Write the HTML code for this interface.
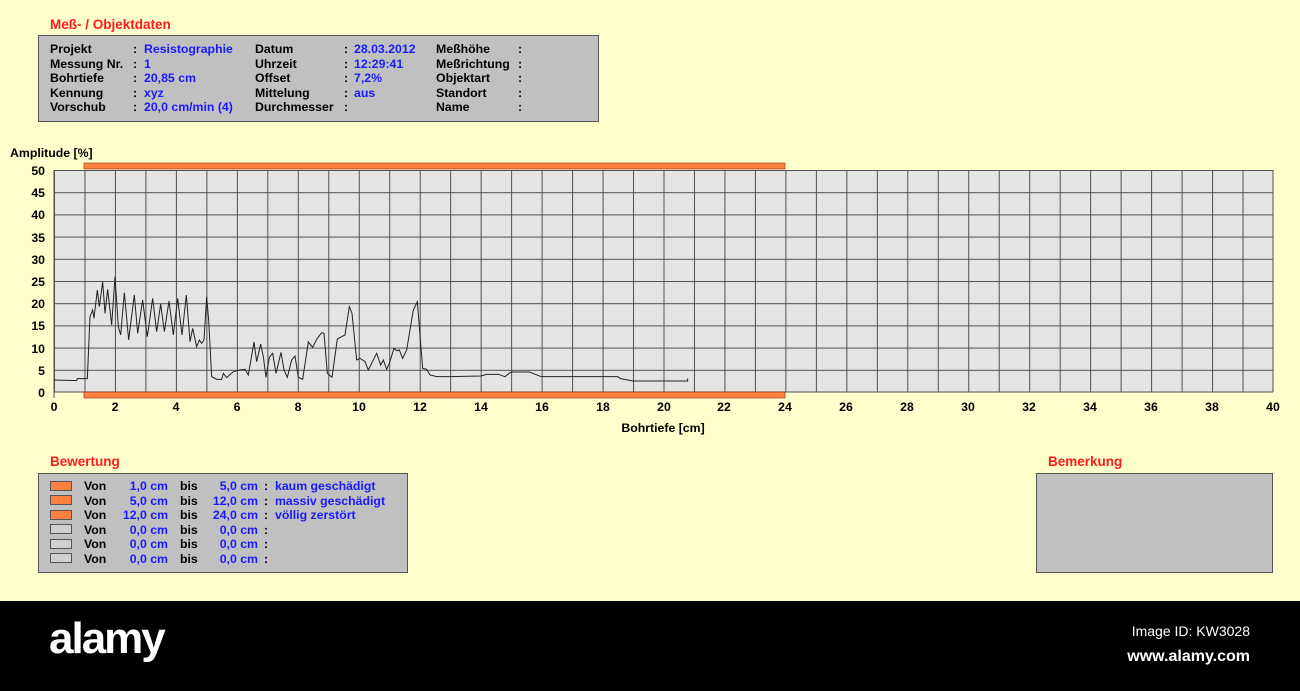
<!DOCTYPE html>
<html><head><meta charset="utf-8"><style>
body{margin:0;width:1300px;height:691px;background:#ffffcc;position:relative;overflow:hidden;font-family:"Liberation Sans",Arial,sans-serif;font-weight:bold;font-size:12.3px;}
.a{position:absolute;white-space:nowrap;}
.r{color:#ff1a1a;font-size:13.5px;}
.b{color:#1a1aff;}
.box{position:absolute;background:#c0c0c0;border:1px solid #555;box-sizing:border-box;}
.sw{position:absolute;width:22px;height:10px;border:1px solid #555;box-sizing:border-box;}
</style></head><body>
<div class="a r" style="left:50px;top:17px">Meß- / Objektdaten</div>
<div class="box" style="left:38px;top:35px;width:561px;height:87px"></div>
<div class="a" style="left:50px;top:42px;line-height:14.5px">Projekt<br>Messung Nr.<br>Bohrtiefe<br>Kennung<br>Vorschub</div>
<div class="a" style="left:133px;top:42px;line-height:14.5px">:<br>:<br>:<br>:<br>:</div>
<div class="a b" style="left:144px;top:42px;line-height:14.5px">Resistographie<br>1<br>20,85 cm<br>xyz<br>20,0 cm/min (4)</div>
<div class="a" style="left:255px;top:42px;line-height:14.5px">Datum<br>Uhrzeit<br>Offset<br>Mittelung<br>Durchmesser</div>
<div class="a" style="left:344px;top:42px;line-height:14.5px">:<br>:<br>:<br>:<br>:</div>
<div class="a b" style="left:354px;top:42px;line-height:14.5px">28.03.2012<br>12:29:41<br>7,2%<br>aus</div>
<div class="a" style="left:436px;top:42px;line-height:14.5px">Meßhöhe<br>Meßrichtung<br>Objektart<br>Standort<br>Name</div>
<div class="a" style="left:518px;top:42px;line-height:14.5px">:<br>:<br>:<br>:<br>:</div>

<div class="a" style="left:10px;top:146px">Amplitude [%]</div>
<svg class="a" style="left:0;top:0" width="1300" height="600">
<defs><pattern id="g" x="54" y="170" width="30.475" height="22.2" patternUnits="userSpaceOnUse">
<path d="M0.5 0V22.2M0 0.5H30.475" stroke="#505050" stroke-width="1" fill="none"/></pattern></defs>
<rect x="54" y="170" width="1219" height="222" fill="#e4e4e4"/>
<rect x="54" y="170" width="1219" height="222" fill="url(#g)"/>
<path d="M1273 170V392M54 392H1273M54 170V398" stroke="#505050" fill="none"/>
<rect x="84" y="163" width="701" height="6" fill="#ff8040" stroke="#803010" stroke-width="0.6"/>
<rect x="84" y="392" width="701" height="6" fill="#ff8040" stroke="#803010" stroke-width="0.6"/>
<g transform="translate(0,140) scale(0.33333)"><polyline fill="none" stroke="#222" stroke-width="3" points="162,720 230,722 232,716 262,716 270,530 278,510 282,535 292,450 298,500 308,425 315,520 323,448 335,555 345,410 355,560 362,585 373,458 386,600 403,465 413,580 428,480 442,590 458,475 470,575 482,492 493,575 507,483 520,585 533,475 546,585 559,465 570,605 578,565 590,620 598,600 605,610 612,600 620,470 626,540 635,710 650,718 665,718 670,700 680,713 700,695 720,690 735,688 745,705 762,606 770,665 782,612 790,650 798,712 808,652 818,640 828,700 843,637 852,690 862,712 875,660 885,648 895,712 908,718 925,606 938,622 950,598 965,578 972,580 982,700 996,712 1012,597 1025,590 1035,585 1048,500 1056,520 1070,660 1080,655 1095,665 1105,690 1130,640 1142,675 1150,660 1160,688 1168,670 1182,625 1190,632 1198,630 1208,655 1220,630 1230,570 1240,510 1252,485 1258,560 1268,685 1280,688 1290,705 1310,710 1350,710 1442,708 1460,703 1496,703 1515,710 1533,696 1588,696 1624,710 1853,710 1862,716 1899,723 2063,723 2063,716"/></g>
<g font-family="Liberation Sans,Arial,sans-serif" font-weight="bold" font-size="12.3" fill="#000" text-anchor="end">
<text x="45" y="175">50</text><text x="45" y="197">45</text><text x="45" y="219">40</text><text x="45" y="242">35</text><text x="45" y="264">30</text><text x="45" y="286">25</text><text x="45" y="308">20</text><text x="45" y="330">15</text><text x="45" y="353">10</text><text x="45" y="375">5</text><text x="45" y="397">0</text>
</g>
<g font-family="Liberation Sans,Arial,sans-serif" font-weight="bold" font-size="12.3" fill="#000" text-anchor="middle">
<text x="54" y="411">0</text><text x="115" y="411">2</text><text x="176" y="411">4</text><text x="237" y="411">6</text><text x="298" y="411">8</text><text x="359" y="411">10</text><text x="420" y="411">12</text><text x="481" y="411">14</text><text x="542" y="411">16</text><text x="603" y="411">18</text><text x="664" y="411">20</text><text x="724" y="411">22</text><text x="785" y="411">24</text><text x="846" y="411">26</text><text x="907" y="411">28</text><text x="968" y="411">30</text><text x="1029" y="411">32</text><text x="1090" y="411">34</text><text x="1151" y="411">36</text><text x="1212" y="411">38</text><text x="1273" y="411">40</text>
<text x="663" y="432">Bohrtiefe [cm]</text>
</g>
</svg>

<div class="a r" style="left:50px;top:454px">Bewertung</div>
<div class="box" style="left:38px;top:473px;width:370px;height:100px"></div>
<div class="sw" style="left:50px;top:481px;background:#ff8040"></div>
<div class="sw" style="left:50px;top:495px;background:#ff8040"></div>
<div class="sw" style="left:50px;top:510px;background:#ff8040"></div>
<div class="sw" style="left:50px;top:524px;background:#d0d0d0"></div>
<div class="sw" style="left:50px;top:539px;background:#d0d0d0"></div>
<div class="sw" style="left:50px;top:553px;background:#d0d0d0"></div>
<div class="a" style="left:84px;top:479px;line-height:14.5px">Von<br>Von<br>Von<br>Von<br>Von<br>Von</div>
<div class="a b" style="left:108px;width:60px;text-align:right;top:479px;line-height:14.5px">1,0 cm<br>5,0 cm<br>12,0 cm<br>0,0 cm<br>0,0 cm<br>0,0 cm</div>
<div class="a" style="left:180px;top:479px;line-height:14.5px">bis<br>bis<br>bis<br>bis<br>bis<br>bis</div>
<div class="a b" style="left:198px;width:60px;text-align:right;top:479px;line-height:14.5px">5,0 cm<br>12,0 cm<br>24,0 cm<br>0,0 cm<br>0,0 cm<br>0,0 cm</div>
<div class="a" style="left:264px;top:479px;line-height:14.5px">:<br>:<br>:<br>:<br>:<br>:</div>
<div class="a b" style="left:275px;top:479px;line-height:14.5px">kaum geschädigt<br>massiv geschädigt<br>völlig zerstört</div>

<div class="a r" style="left:1048px;top:454px">Bemerkung</div>
<div class="box" style="left:1036px;top:473px;width:237px;height:100px"></div>

<div class="a" style="left:0;top:601px;width:1300px;height:90px;background:#000"></div>
<div class="a" style="left:49px;top:614px;color:#fff;font-size:44px;letter-spacing:-2px">alamy</div>
<div class="a" style="right:50px;top:623px;color:#fff;font-weight:normal;font-size:14px">Image ID: KW3028</div>
<div class="a" style="right:50px;top:648px;color:#fff;font-size:16px">www.alamy.com</div>
</body></html>
